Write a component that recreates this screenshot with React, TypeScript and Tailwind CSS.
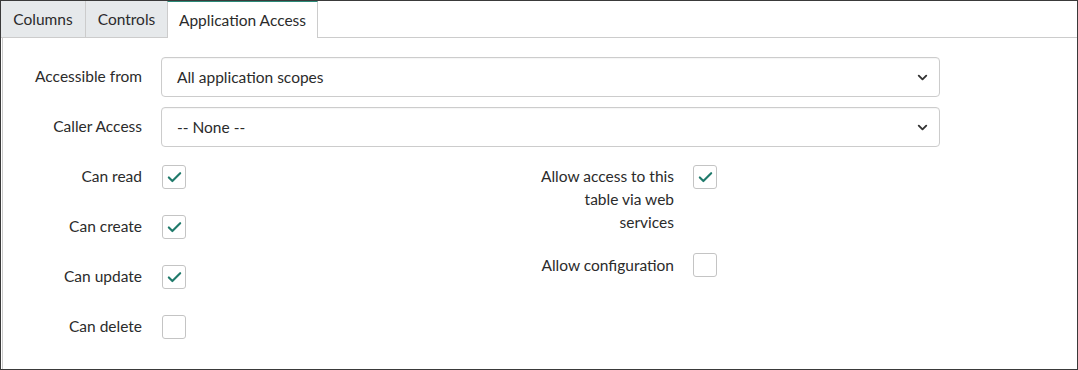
import { ChevronDown } from "lucide-react"

function Check() {
  return (
    <svg viewBox="0 0 24 24" className="w-[17px] h-[17px]" fill="none" stroke="#1f7a6b" strokeWidth={3} strokeLinecap="round" strokeLinejoin="round">
      <path d="M20 6 9 17l-5-5" />
    </svg>
  )
}

function Box({ checked }: { checked?: boolean }) {
  return (
    <div className="w-6 h-6 shrink-0 rounded-[3px] border border-[#c4c4c4] bg-white flex items-center justify-center">
      {checked && <Check />}
    </div>
  )
}

function SelectRow({ label, value }: { label: string; value: string }) {
  return (
    <div className="flex items-center gap-[19px]">
      <div className="w-[139px] text-right">{label}</div>
      <div className="w-[779px] h-[40px] rounded-[4px] border border-[#cccccc] bg-white flex items-center justify-between pl-[15px] pr-[9px] pt-px shadow-[inset_0_1px_1px_rgba(0,0,0,0.04)]">
        <span>{value}</span>
        <ChevronDown className="w-[15px] h-[15px] text-[#333]" strokeWidth={3} />
      </div>
    </div>
  )
}

const leftRows = [
  { label: "Can read", checked: true },
  { label: "Can create", checked: true },
  { label: "Can update", checked: true },
  { label: "Can delete", checked: false },
]

export default function App() {
  return (
    <div
      className="w-[1078px] h-[370px] border border-[#3a3a3a] bg-white text-[15.5px] text-[#2b2b2b] flex flex-col overflow-hidden"
      style={{ fontFamily: "Lato, 'Open Sans', sans-serif" }}
    >
      {/* Tabs */}
      <div className="flex h-[37px] shrink-0">
        <div className="flex items-center pt-px w-[85px] justify-center bg-[#e6e9eb] border-r border-b border-[#cccccc]">Columns</div>
        <div className="flex items-center pt-px w-[81px] justify-center bg-[#e6e9eb] border-b border-[#cccccc]">Controls</div>
        <div className="flex items-center pt-px w-[151px] justify-center bg-white border-x border-[#cccccc] border-t border-t-[#2a8a78]">
          Application Access
        </div>
        <div className="flex-1 border-b border-[#cccccc]" />
      </div>

      {/* Panel */}
      <div className="flex-1 ml-px border-l border-[#cccccc] pt-[19px]">
        <div className="flex flex-col gap-[10px]">
          <SelectRow label="Accessible from" value="All application scopes" />
          <SelectRow label="Caller Access" value="-- None --" />
        </div>

        <div className="flex mt-[5px]">
          <div className="w-[531px] flex flex-col">
            {leftRows.map((r) => (
              <div key={r.label} className="h-[50px] flex items-center gap-5">
                <div className="w-[139px] text-right">{r.label}</div>
                <Box checked={r.checked} />
              </div>
            ))}
          </div>

          <div className="flex flex-col pt-[13px]">
            <div className="flex items-start gap-[19px]">
              <div className="w-[140px] text-right leading-[23px]">Allow access to this table via web services</div>
              <Box checked />
            </div>
            <div className="flex items-center gap-[19px] mt-[19px]">
              <div className="w-[140px] text-right leading-[23px]">Allow configuration</div>
              <Box />
            </div>
          </div>
        </div>
      </div>
    </div>
  )
}
